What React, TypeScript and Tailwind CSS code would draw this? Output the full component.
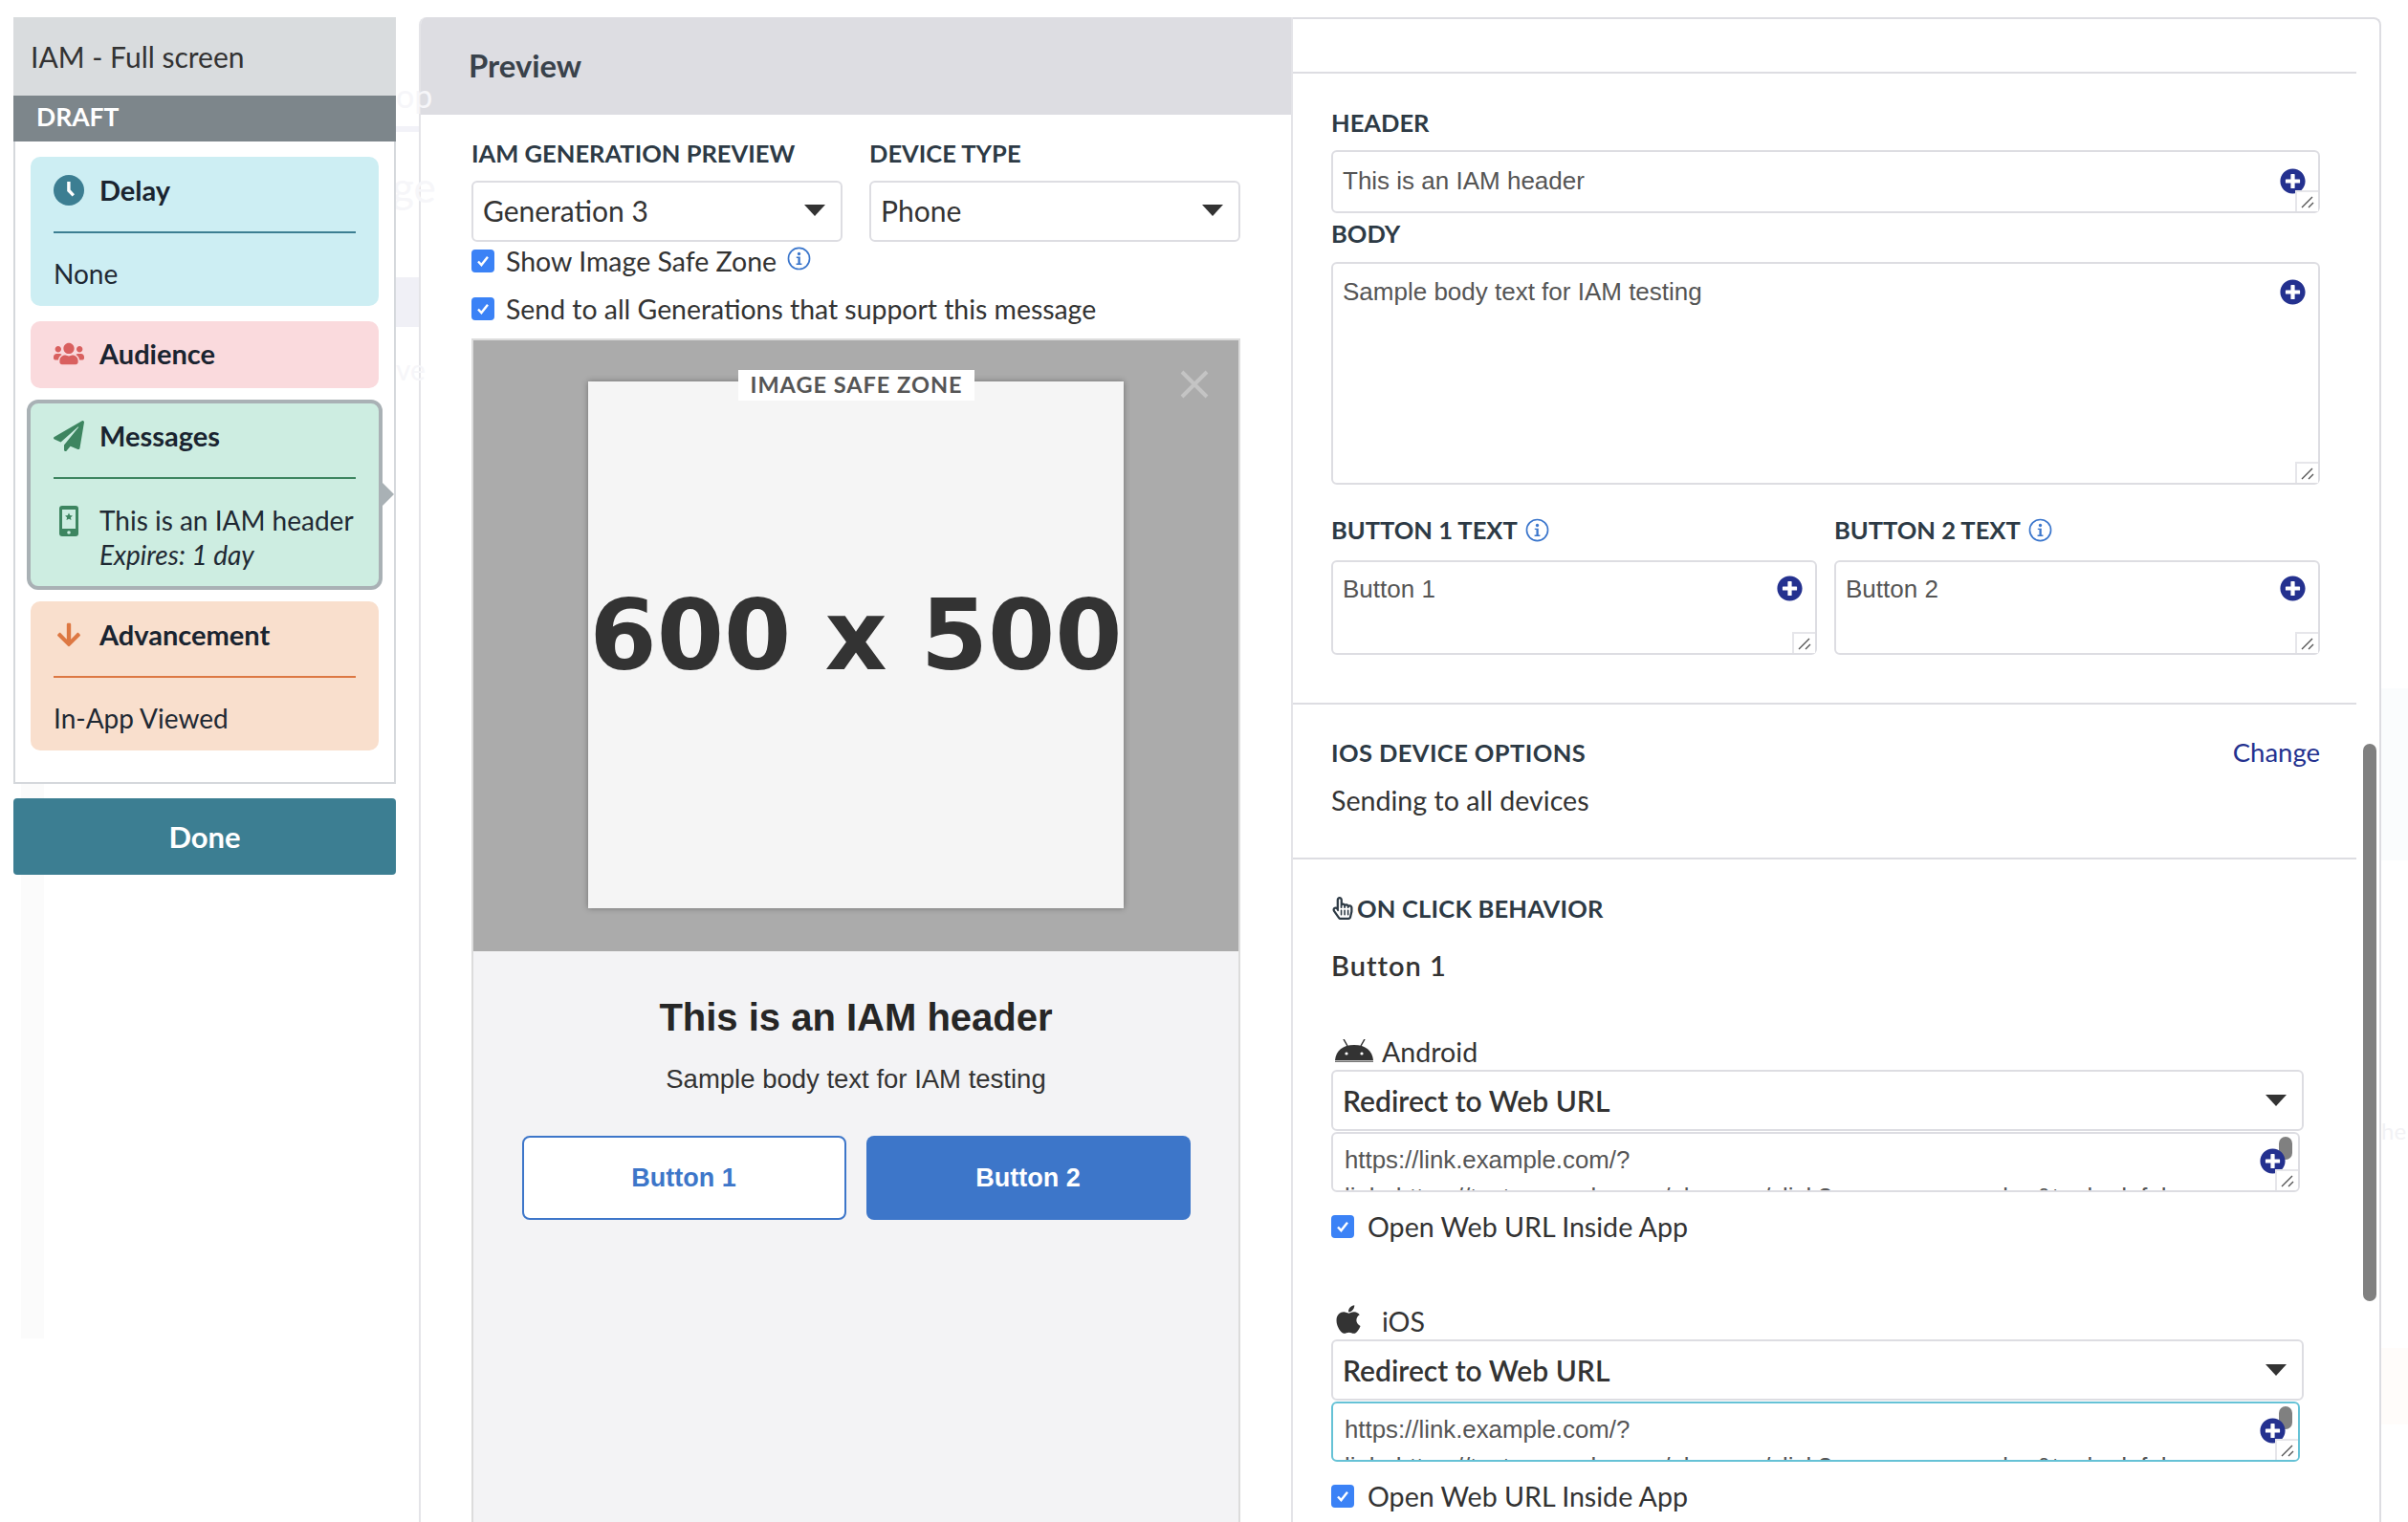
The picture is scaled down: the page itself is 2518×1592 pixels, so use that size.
import { FaApple, FaArrowDown, FaPaperPlane, FaPlusCircle, FaRegHandPointer, FaUsers } from 'react-icons/fa';
import { ReactNode } from 'react';

const SANS = "font-['Lato','Noto_Sans',sans-serif]";
const HELV = "font-['Liberation_Sans',Arial,sans-serif]";

function Caret() {
  return <div className="h-0 w-0 border-x-[11px] border-t-[12px] border-x-transparent border-t-[#333]" />;
}

function InfoIcon() {
  return (
    <svg width="25" height="25" viewBox="0 0 24 24" className="shrink-0">
      <circle cx="12" cy="12" r="10.6" fill="none" stroke="#3b76cc" strokeWidth="1.6" />
      <circle cx="12" cy="7.2" r="1.6" fill="#3b76cc" />
      <path d="M9.4 10.2h3.8v6.6h1.6v1.4H9.2v-1.4H11v-5.2H9.4z" fill="#3b76cc" />
    </svg>
  );
}

function Check() {
  return (
    <div className="flex h-6 w-6 shrink-0 items-center justify-center rounded-[4px] bg-[#3b82f6]">
      <svg width="16" height="16" viewBox="0 0 16 16">
        <path d="M3 8.5l3.4 3.6L13 3.8" fill="none" stroke="#fff" strokeWidth="2.4" />
      </svg>
    </div>
  );
}

function Grip() {
  return (
    <div className="absolute bottom-0 right-0 flex h-[22px] w-[24px] items-center justify-center border-l-2 border-t-2 border-[#e6e6ea] bg-white">
      <svg width="16" height="16" viewBox="0 0 16 16">
        <path d="M2 14L13 3M9 14l5-5" stroke="#555" strokeWidth="1.4" />
      </svg>
    </div>
  );
}

function TextBox({ text, className, plusClass, textClass }: { text: string; className: string; plusClass: string; textClass: string }) {
  return (
    <div className={`relative rounded-[6px] border-2 border-[#dddde2] bg-white ${HELV} text-[26px] text-[#555] ${className}`}>
      <div className={`absolute left-[10px] leading-[30px] ${textClass}`}>{text}</div>
      <FaPlusCircle className={`absolute text-[27px] text-[#24318f] ${plusClass}`} />
      <Grip />
    </div>
  );
}

function Select({ label, className }: { label: string; className: string }) {
  return (
    <div className={`flex h-[64px] items-center justify-between rounded-[6px] border-2 border-[#dddde2] bg-white pl-[10px] pr-[16px] text-[30px] text-[#333] ${className}`}>
      <span>{label}</span>
      <Caret />
    </div>
  );
}

function UrlBox({ focused }: { focused?: boolean }) {
  return (
    <div className={`relative h-[63px] w-[1013px] overflow-hidden rounded-[6px] border-2 bg-white ${HELV} text-[25.8px] text-[#555] ${focused ? 'border-[#66c2d6]' : 'border-[#dddde2]'}`}>
      <div className="pl-[12px] pt-[8px] leading-[39px]">
        <div>https://link.example.com/?</div>
        <div className="whitespace-nowrap">link=https://test.example.com/abc.com/click?param=somevalue&t=abcdefgh</div>
      </div>
      <div className="absolute right-[6px] top-[3px] h-[24px] w-[14px] rounded-full bg-[#808080]" />
      <FaPlusCircle className="absolute right-[13px] top-[15px] text-[27px] text-[#24318f]" />
      <Grip />
    </div>
  );
}

function Card({ bg, rule, icon, title, children, active }: { bg: string; rule?: string; icon: ReactNode; title: string; children?: ReactNode; active?: boolean }) {
  return (
    <div className={`relative ${bg} ${active ? 'mx-[-4px] rounded-[12px] border-4 border-[#a9b1b5]' : 'rounded-[10px]'}`}>
      <div className={`px-[24px] ${active ? 'pt-[18px]' : rule ? 'pt-[19px]' : 'pb-[20px] pt-[18px]'}`}>
        <div className="flex h-[32px] items-center">
          <div className="flex w-[32px] justify-center">{icon}</div>
          <span className="ml-[16px] text-[29px] font-bold text-[#1a2430]">{title}</span>
        </div>
        {rule && <div className={`mt-[27px] h-[2px] ${rule}`} />}
        {children}
      </div>
    </div>
  );
}

function Field({ children, className }: { children: ReactNode; className?: string }) {
  return <div className={`text-[25.5px] font-bold leading-[30px] text-[#2d3a45] ${className ?? ''}`}>{children}</div>;
}

function Platform({ icon, name, focused }: { icon: ReactNode; name: string; focused?: boolean }) {
  return (
    <div>
      <div className="flex h-[44px] items-end">
        <div className="flex w-[53px] justify-start pl-[4px]">{icon}</div>
        <span className="text-[28.6px] leading-[34px] text-[#333]">{name}</span>
      </div>
      <Select label="Redirect to Web URL" className="mt-[2px] w-[1017px] text-[30.5px] font-semibold" />
      <div className="mt-[1px]">
        <UrlBox focused={focused} />
      </div>
      <div className="mt-[24px] flex items-center gap-[14px] text-[28.6px] leading-[24px] text-[#333]">
        <Check />
        <span>Open Web URL Inside App</span>
      </div>
    </div>
  );
}

export default function App() {
  return (
    <div className={`relative flex h-[1592px] w-[2518px] overflow-hidden bg-white ${SANS}`}>
      {/* Ghosted page behind the modal */}
      <div className="absolute left-[22px] top-[820px] h-[580px] w-[24px] bg-[#fbfbfb]" />
      <div className="absolute left-[414px] top-[290px] h-[52px] w-[24px] bg-[#f0f0f6]" />
      <div className="absolute left-[414px] top-[132px] h-[6px] w-[24px] bg-[#f2f2f8]" />
      <div className="absolute left-[2470px] top-[720px] h-[180px] w-[48px] bg-[#fafcfd]" />
      <div className="absolute left-[2470px] top-[1410px] h-[80px] w-[48px] bg-[#fffcfa]" />
      <div className="absolute left-[414px] top-[80px] text-[34px] leading-[40px] text-[#f6f6f9]">op</div>
      <div className="absolute left-[410px] top-[170px] text-[44px] leading-[50px] text-[#f6f6f9]">ge</div>
      <div className="absolute left-[414px] top-[368px] text-[30px] leading-[36px] text-[#f6f6f9]">ve</div>
      <div className="absolute left-[2466px] top-[206px] text-[24px] leading-[30px] text-[#f2f2f5]">as</div>
      <div className="absolute left-[2490px] top-[1168px] text-[24px] leading-[30px] text-[#f2f2f5]">he</div>

      {/* Left rail */}
      <div className="relative ml-[14px] mt-[18px] w-[400px] shrink-0">
        <div className="flex h-[82px] items-center bg-[#d9dcde] pl-[18px] text-[30px] text-[#333]">IAM - Full screen</div>
        <div className="flex h-[48px] items-center bg-[#7d868b] pb-[2px] pl-[24px] text-[26.5px] font-bold text-white">DRAFT</div>
        <div className="flex h-[672px] flex-col border-x-2 border-b-2 border-[#d5d8dc] bg-white px-[16px] pt-[16px]">
          <div className="h-[156px]">
            <Card
              bg="bg-[#cdeef3]"
              rule="bg-[#3c7e92]"
              title="Delay"
              icon={
                <svg width="32" height="32" viewBox="0 0 32 32">
                  <circle cx="16" cy="16" r="16" fill="#3c7e92" />
                  <path d="M14.2 7h3.4v8.6l4.4 4.6-2.4 2.4-5.4-5.6z" fill="#fff" />
                </svg>
              }
            >
              <div className="pb-[16px] pt-[24px] text-[28px] leading-[36px] text-[#1f2933]">None</div>
            </Card>
          </div>
          <div className="mt-[16px]">
            <Card bg="bg-[#fadadd]" title="Audience" icon={<FaUsers className="text-[32px] text-[#d9605f]" />} />
          </div>
          <div className="mt-[12px]">
            <Card
              active
              bg="bg-[#cdede1]"
              rule="bg-[#3d8560]"
              title="Messages"
              icon={<FaPaperPlane className="text-[32px] text-[#3d8560]" />}
            >
              <div className="flex pt-[25px]">
                <div className="flex w-[32px] justify-center pt-[3px]">
                  <svg width="20" height="32" viewBox="0 0 20 32">
                    <rect width="20" height="32" rx="3" fill="#3d8560" />
                    <rect x="3" y="4" width="14" height="20" fill="#cdede1" />
                    <circle cx="10" cy="28" r="1.8" fill="#cdede1" />
                    <path d="M10 7.5l1.2 2.6 2.8.3-2.1 1.9.6 2.8-2.5-1.4-2.5 1.4.6-2.8-2.1-1.9 2.8-.3z" fill="#3d8560" />
                  </svg>
                </div>
                <div className="ml-[16px] whitespace-nowrap pb-[15px] text-[28px] leading-[36px] text-[#1f2933]">
                  <div>This is an IAM header</div>
                  <div className="italic">Expires: 1 day</div>
                </div>
              </div>
            </Card>
            {/* active pointer */}
            <div className="absolute left-[386px] top-[487px] h-0 w-0 border-y-[12px] border-l-[12px] border-y-transparent border-l-[#a9b1b5]" />
          </div>
          <div className="mt-[12px]">
            <Card bg="bg-[#f9dfcd]" rule="bg-[#dd7843]" title="Advancement" icon={<FaArrowDown className="text-[28px] text-[#dd7843]" />}>
              <div className="pb-[16px] pt-[24px] text-[28px] leading-[36px] text-[#1f2933]">In-App Viewed</div>
            </Card>
          </div>
        </div>
        <div className="mt-[15px] flex h-[80px] items-center justify-center rounded-[4px] bg-[#3c7e92] text-[31px] font-bold text-white">Done</div>
      </div>

      {/* Preview */}
      <div className="ml-[24px] mt-[18px] flex w-[914px] shrink-0 flex-col overflow-hidden rounded-tl-[8px] border-x-2 border-[#e4e4e8] bg-white">
        <div className="flex h-[102px] items-center bg-[#dddde2] pl-[50px] text-[32.8px] font-bold text-[#39424b]">Preview</div>
        <div className="pl-[53px] pr-[53px] pt-[25px]">
          <div className="flex gap-[28px]">
            <div className="w-[388px]">
              <Field className="whitespace-nowrap">IAM GENERATION PREVIEW</Field>
              <Select label="Generation 3" className="mt-[14px] w-[388px] pb-[2px]" />
            </div>
            <div className="w-[388px]">
              <Field>DEVICE TYPE</Field>
              <Select label="Phone" className="mt-[14px] w-[388px] pb-[2px]" />
            </div>
          </div>
          <div className="mt-[8px] flex h-[24px] items-center gap-[12px] text-[28.5px] text-[#333]">
            <Check />
            <span>Show Image Safe Zone</span>
            <div className="ml-[-1px] -translate-y-[3px]"><InfoIcon /></div>
          </div>
          <div className="mt-[26px] flex h-[24px] items-center gap-[12px] text-[28.4px] text-[#333]">
            <Check />
            <span>Send to all Generations that support this message</span>
          </div>
        </div>
        <div className="ml-[53px] mt-[19px] w-[804px] flex-1 border-x-2 border-t-2 border-[#dcdcdc] bg-[#f3f3f5]">
          <div className="relative flex h-[639px] justify-center bg-[#ababab] pt-[43px]">
            <div className="relative flex h-[551px] w-[560px] items-center justify-center bg-[#f5f5f5] pb-[18px] shadow-[0_0_6px_rgba(0,0,0,0.35)]">
              <span className="font-['DejaVu_Sans',sans-serif] text-[101px] font-bold text-[#333]">600 x 500</span>
              <div className="absolute left-[157px] top-[-12px] flex h-[32px] w-[247px] items-center justify-center bg-white text-[23.5px] font-bold tracking-[1px] text-[#555]">IMAGE SAFE ZONE</div>
            </div>
            <svg width="30" height="30" viewBox="0 0 30 30" className="absolute right-[31px] top-[31px]">
              <path d="M2 2l26 26M28 2L2 28" stroke="#c4c4c4" strokeWidth="4" />
            </svg>
          </div>
          <div className={`pt-[47px] text-center ${HELV}`}>
            <div className="text-[40px] font-bold leading-[44px] text-[#262626]">This is an IAM header</div>
            <div className="mt-[21px] text-[27.5px] leading-[44px] text-[#333]">Sample body text for IAM testing</div>
            <div className="mt-[37px] flex justify-center gap-[21px] text-[27px] font-bold">
              <div className="flex h-[88px] w-[339px] items-center justify-center rounded-[8px] border-2 border-[#3d76c9] bg-white text-[#3d76c9]">Button 1</div>
              <div className="flex h-[88px] w-[339px] items-center justify-center rounded-[8px] bg-[#3d76c9] text-white">Button 2</div>
            </div>
          </div>
        </div>
      </div>

      {/* Editor column */}
      <div className="relative mt-[18px] h-[1574px] w-[1138px] shrink-0 overflow-hidden rounded-tr-[8px] border-r-2 border-t-2 border-[#dddde2] bg-white">
        <div className="mr-[24px]">
          <div className="h-[57px] border-b-2 border-[#dddde2]" />
          <div className="border-b-2 border-[#dddde2] pb-[50px] pl-[40px] pr-[38px] pt-[35px]">
            <Field className="mt-[1px]">HEADER</Field>
            <TextBox text="This is an IAM header" textClass="top-[15px]" className="mt-[14px] h-[66px] w-[1034px]" plusClass="right-[13px] top-[17px]" />
            <Field className="mt-[6px]">BODY</Field>
            <TextBox text="Sample body text for IAM testing" textClass="top-[14px]" className="mt-[15px] h-[233px] w-[1034px]" plusClass="right-[13px] top-[16px]" />
            <div className="mt-[32px] flex gap-[18px]">
              <div className="w-[508px]">
                <Field className="flex items-center gap-[8px]">BUTTON 1 TEXT <InfoIcon /></Field>
                <TextBox text="Button 1" textClass="top-[13px]" className="mt-[17px] h-[99px]" plusClass="right-[13px] top-[14px]" />
              </div>
              <div className="w-[508px]">
                <Field className="flex items-center gap-[8px]">BUTTON 2 TEXT <InfoIcon /></Field>
                <TextBox text="Button 2" textClass="top-[13px]" className="mt-[17px] h-[99px]" plusClass="right-[13px] top-[14px]" />
              </div>
            </div>
          </div>
          <div className="border-b-2 border-[#dddde2] pb-[44px] pl-[40px] pr-[38px] pt-[35px]">
            <div className="flex items-center justify-between">
              <Field className="tracking-[0.4px]">IOS DEVICE OPTIONS</Field>
              <span className="text-[27.5px] leading-[30px] text-[#24318f]">Change</span>
            </div>
            <div className="mt-[19px] text-[28.6px] leading-[32px] text-[#333]">Sending to all devices</div>
          </div>
          <div className="pl-[40px] pr-[38px] pt-[36px]">
            <Field className="flex items-center gap-[3px] tracking-[0.2px]">
              <FaRegHandPointer className="text-[24px] text-[#2d3a45]" /> ON CLICK BEHAVIOR
            </Field>
            <div className="mt-[27px] text-[29px] font-semibold leading-[36px] tracking-[1px] text-[#333]">Button 1</div>
            <div className="mt-[45px]">
              <Platform
                name="Android"
                icon={
                  <svg width="40" height="24" viewBox="0 0 40 24" className="mb-[6px]">
                    <path d="M0 22C1 12 8 6 20 6s19 6 20 16z" fill="#333" />
                    <path d="M0 23.2h40" stroke="#333" strokeWidth="1" />
                    <path d="M9 0l4 7M31 0l-4 7" stroke="#333" strokeWidth="1.5" />
                    <circle cx="12" cy="15" r="1.6" fill="#fff" />
                    <circle cx="28" cy="15" r="1.6" fill="#fff" />
                  </svg>
                }
              />
            </div>
            <div className="mt-[60px]">
              <Platform focused name="iOS" icon={<FaApple className="mb-[2px] ml-[-3px] text-[34px] text-[#333]" />} />
            </div>
          </div>
        </div>
        <div className="absolute right-[3px] top-[758px] h-[583px] w-[14px] rounded-full bg-[#808080]" />
      </div>
    </div>
  );
}
